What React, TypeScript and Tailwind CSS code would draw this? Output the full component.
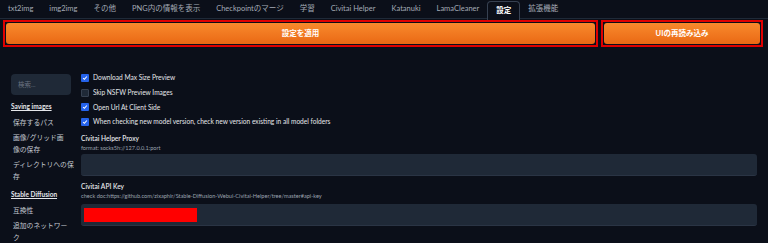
const tabs = [
  "txt2img",
  "img2img",
  "その他",
  "PNG内の情報を表示",
  "Checkpointのマージ",
  "学習",
  "Civitai Helper",
  "Katanuki",
  "LamaCleaner",
  "設定",
  "拡張機能",
];

const checks = [
  { label: "Download Max Size Preview", on: true },
  { label: "Skip NSFW Preview Images", on: false },
  { label: "Open Url At Client Side", on: true },
  {
    label:
      "When checking new model version, check new version existing in all model folders",
    on: true,
  },
];

const font = "font-['Lato','Noto_Sans_CJK_JP',sans-serif]";

function Check({ on }: { on: boolean }) {
  if (!on) {
    return (
      <span className="w-[8px] h-[8px] rounded-[1px] bg-[#1f2937] border border-[#374151]" />
    );
  }
  return (
    <span className="w-[8px] h-[8px] rounded-[1px] bg-[#2563eb] flex items-center justify-center">
      <svg width="6" height="6" viewBox="0 0 8 8">
        <path d="M1.5 4.2 L3.2 5.8 L6.5 2" stroke="white" strokeWidth="1.4" fill="none" />
      </svg>
    </span>
  );
}

function SideHead({ children }: { children: string }) {
  return (
    <div className="text-[6.5px] font-bold text-[#e5e7eb] underline h-[16px] flex items-center">
      {children}
    </div>
  );
}

function SideItem({ lines }: { lines: string[] }) {
  return (
    <div className="pl-[2px] pt-[1px] pb-[2px] text-[6.8px] text-[#c4c9d1] leading-[12px]">
      {lines.map((l, i) => (
        <div key={i}>{l}</div>
      ))}
    </div>
  );
}

export default function App() {
  return (
    <div className={`w-[768px] h-[243px] bg-[#0b0f19] overflow-hidden ${font}`}>
      <div className="flex h-[19px] border-b border-[#1f2937]">
        {tabs.map((t) => (
          <div
            key={t}
            className={
              t === "設定"
                ? "px-[8px] flex items-center text-[7.5px] text-white font-semibold border border-b-0 border-[#374151] rounded-t-[4px] mt-[1px] bg-[#0b0f19] h-[19px]"
                : "px-[8px] flex items-center text-[7.5px] text-[#a4abb6]"
            }
          >
            {t}
          </div>
        ))}
      </div>

      <div className="flex gap-[3px] pl-[3px] pr-[5px] mt-[1px]">
        <div className="flex-1 border-2 border-[#e00000] p-[1px]">
          <button className="block w-full h-[21px] rounded-[3px] bg-gradient-to-b from-[#f88a2c] to-[#ea6813] text-white text-[7.5px] font-bold">
            設定を適用
          </button>
        </div>
        <div className="w-[162px] border-2 border-[#e00000] p-[1px]">
          <button className="block w-full h-[21px] rounded-[3px] bg-gradient-to-b from-[#f88a2c] to-[#ea6813] text-white text-[7.5px] font-bold">
            UIの再読み込み
          </button>
        </div>
      </div>

      <div className="flex mt-[24px]">
        <div className="w-[70px] ml-[11px] shrink-0 pt-[3px]">
          <div className="w-[60px] h-[21px] rounded-[4px] bg-[#1f2937] flex items-center pl-[7px] text-[6.5px] text-[#6b7280] mb-[4px]">
            検索...
          </div>
          <SideHead>Saving images</SideHead>
          <SideItem lines={["保存するパス"]} />
          <SideItem lines={["画像/グリッド画", "像の保存"]} />
          <SideItem lines={["ディレクトリへの保", "存"]} />
          <div className="h-[3px]" />
          <SideHead>Stable Diffusion</SideHead>
          <SideItem lines={["互換性"]} />
          <SideItem lines={["追加のネットワー", "ク"]} />
        </div>

        <div className="flex-1 pr-[11px]">
          {checks.map((c) => (
            <div key={c.label} className="flex items-center gap-[4px] h-[14.6px] text-[6.6px] text-[#e5e7eb]">
              <Check on={c.on} />
              <span>{c.label}</span>
            </div>
          ))}
          <div className="mt-[4px] text-[6.6px] font-semibold text-[#e5e7eb] leading-[10px]">
            Civitai Helper Proxy
          </div>
          <div className="text-[5.6px] text-[#9ca3af] leading-[9px]">
            format: socks5h://127.0.0.1:port
          </div>
          <div className="mt-[2px] h-[22px] rounded-[3px] bg-[#1f2937] border-b border-[#2a3444]" />
          <div className="mt-[5px] text-[6.6px] font-semibold text-[#e5e7eb] leading-[10px]">
            Civitai API Key
          </div>
          <div className="text-[5.6px] text-[#9ca3af] leading-[9px]">
            check doc:https://github.com/zixaphir/Stable-Diffusion-Webui-Civitai-Helper/tree/master#api-key
          </div>
          <div className="mt-[4px] h-[22px] rounded-[3px] bg-[#1f2937] border-b border-[#2a3444] flex items-center pl-[3px]">
            <div className="w-[113px] h-[14px] bg-[#ff0000]" />
          </div>
        </div>
      </div>
    </div>
  );
}
